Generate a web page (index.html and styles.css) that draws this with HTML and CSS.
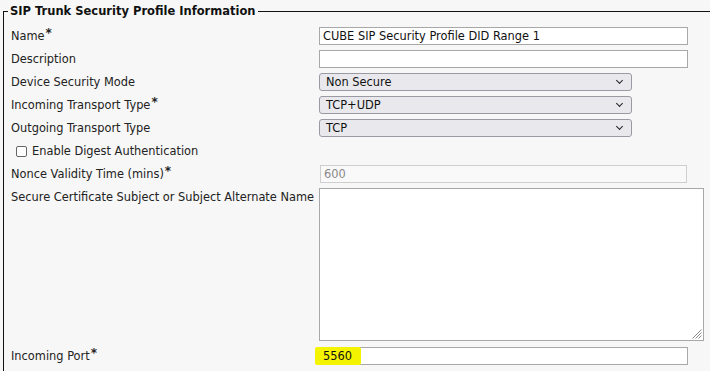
FILE: index.html
```html
<!DOCTYPE html>
<html lang="en">
<head>
    <meta charset="UTF-8">
    <title>SIP Trunk Security Profile</title>
    <link rel="stylesheet" href="styles.css">
</head>
<body>
    <fieldset class="profile">
        <legend>SIP Trunk Security Profile Information</legend>
        <div class="form">
            <label class="lbl">Name<span class="req">*</span></label>
            <input class="txt" type="text" value="CUBE SIP Security Profile DID Range 1">

            <label class="lbl">Description</label>
            <input class="txt" type="text" value="">

            <label class="lbl">Device Security Mode</label>
            <div class="sel">Non Secure<span class="chev"></span></div>

            <label class="lbl">Incoming Transport Type<span class="req">*</span></label>
            <div class="sel">TCP+UDP<span class="chev"></span></div>

            <label class="lbl">Outgoing Transport Type</label>
            <div class="sel">TCP<span class="chev"></span></div>

            <div class="check-row">
                <span class="box"></span>
                <span>Enable Digest Authentication</span>
            </div>

            <label class="lbl">Nonce Validity Time (mins)<span class="req">*</span></label>
            <input class="txt disabled" type="text" value="600" disabled>

            <label class="lbl">Secure Certificate Subject or Subject Alternate Name</label>
            <div class="area">
                <svg class="grip" width="11" height="11" viewBox="0 0 11 11">
                    <path d="M10.5 1.5 L1.5 10.5 M10.5 4.5 L4.5 10.5 M10.5 7.5 L7.5 10.5" stroke="#8a8a8a" stroke-width="1" fill="none"/>
                </svg>
            </div>

            <label class="lbl port-lbl">Incoming Port<span class="req">*</span></label>
            <div class="txt port"><span class="mark">5560</span></div>
        </div>
    </fieldset>
</body>
</html>
```

FILE: styles.css
```css
body {
    margin: 0;
    background: #f7f7f7;
    font-family: "DejaVu Sans", Verdana, sans-serif;
    font-size: 11.4px;
    color: #222;
    height: 371px;
    overflow: hidden;
}

.profile {
    box-sizing: border-box;
    margin: 4px 0 0 3px;
    padding: 9px 0 0 7px;
    border: none;
    border-top: 1px solid #111;
    border-left: 1px solid #111;
    height: 367px;
}

.profile legend {
    font-weight: bold;
    font-size: 11.5px;
    padding: 0 2px;
    margin-left: -3px;
    color: #111;
}

.form {
    display: grid;
    grid-template-columns: 308px 1fr;
    row-gap: 5px;
    align-items: start;
}

.lbl {
    line-height: 14px;
    padding-top: 2px;
    white-space: nowrap;
}

.req {
    font-weight: bold;
    font-size: 12px;
    position: relative;
    top: -3px;
    margin-left: 1px;
}

.txt {
    box-sizing: border-box;
    width: 369px;
    height: 18px;
    margin: 0;
    padding: 0 3px;
    border: 1px solid #a8a8a8;
    background: #fff;
    font-family: inherit;
    font-size: 11.4px;
    color: #111;
    outline: none;
}

.txt.disabled {
    margin-left: 1px;
    width: 367px;
    border-color: #cfcfcf;
    background: #f9f9f9;
    color: #888;
}

.sel {
    box-sizing: border-box;
    width: 313px;
    height: 18px;
    padding: 0 6px;
    border: 1px solid #9a9aa4;
    border-radius: 3px;
    background: #e9e9ed;
    line-height: 16px;
    color: #111;
    display: flex;
    justify-content: space-between;
    align-items: center;
}

.chev {
    width: 4px;
    height: 4px;
    border-right: 1.5px solid #222;
    border-bottom: 1.5px solid #222;
    transform: rotate(45deg);
    margin: -3px 3px 0 0;
}

.check-row {
    grid-column: 1 / 3;
    display: flex;
    align-items: center;
    gap: 5px;
    height: 18px;
    padding-left: 5px;
}

.box {
    width: 11px;
    height: 11px;
    box-sizing: border-box;
    border: 1px solid #666;
    border-radius: 2px;
    background: #fff;
}

.area {
    box-sizing: border-box;
    width: 385px;
    height: 153px;
    border: 1px solid #a8a8a8;
    background: #fff;
    position: relative;
}

.grip {
    position: absolute;
    right: 1px;
    bottom: 1px;
}

.port-lbl {
    margin-top: 1px;
}

.port {
    margin-top: 1px;
    line-height: 16px;
    padding: 0;
}

.mark {
    display: inline-block;
    background: #f4f400;
    padding: 1px 9px 1px 8px;
    margin: -1px 0 0 -5px;
    line-height: 16px;
    border-radius: 2px;
}
```
